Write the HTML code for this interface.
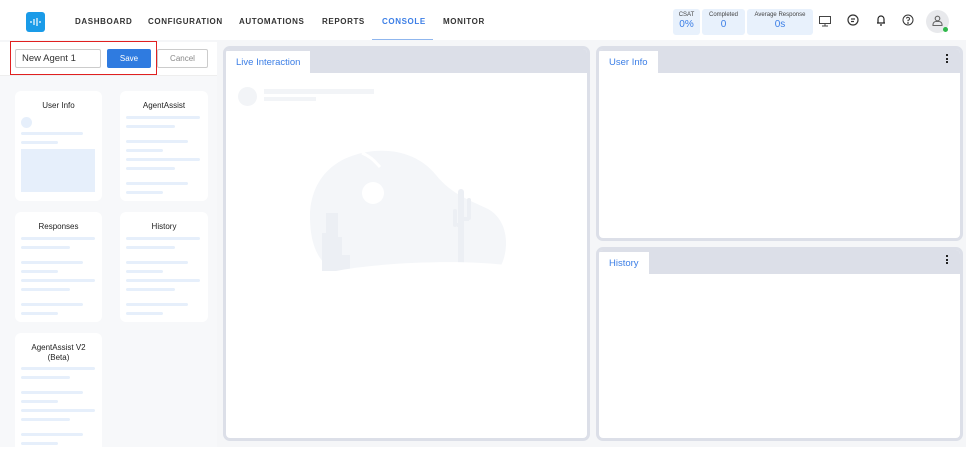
<!DOCTYPE html>
<html><head><style>
*{margin:0;padding:0;box-sizing:border-box}
body{width:978px;height:457px;background:#fff;font-family:"Liberation Sans",sans-serif;position:relative;overflow:hidden}
.a{position:absolute}
.nav{font-size:8px;font-weight:bold;letter-spacing:.6px;color:#333;top:17px}
.card{position:absolute;background:#fff;border-radius:6px}
.card .t{text-align:center;font-size:8px;color:#222;margin-top:10px;line-height:10px}
.ln{position:absolute;height:3px;background:#e6effb;border-radius:2px}
.panel{position:absolute;border:3px solid #dcdfe8;border-radius:7px;background:#fff;overflow:hidden}
.panel .hd{height:24px;background:#dcdfe8;position:relative}
.panel .tab{position:absolute;left:0;top:2px;height:22px;background:#fff;color:#3b7ee6;font-size:9.5px;padding:6px 10px 0}
.dots{position:absolute;right:12px;top:5px;width:2px}
.dots i{display:block;width:2px;height:2px;background:#222;margin-bottom:1.5px}
.stat{position:absolute;top:9px;height:26px;background:#e8f1fc;border-radius:3px;text-align:center;font-size:6px;color:#444;padding-top:3px}
.stat b{display:block;font-size:10px;color:#3b7ee6;font-weight:normal;margin-top:1px}
</style></head><body>
<div class="a" style="left:26px;top:12px;width:19px;height:20px;background:#1a9be8;border-radius:3px"></div>
<svg class="a" style="left:28px;top:15px" width="15" height="14"><g stroke="#fff" stroke-width="1.2"><line x1="3" y1="6" x2="3" y2="8"/><line x1="6" y1="4" x2="6" y2="10"/><line x1="9" y1="3" x2="9" y2="11"/><line x1="12" y1="6" x2="12" y2="8"/></g></svg>
<div class="a nav" style="left:75px">DASHBOARD</div>
<div class="a nav" style="left:148px">CONFIGURATION</div>
<div class="a nav" style="left:239px">AUTOMATIONS</div>
<div class="a nav" style="left:322px">REPORTS</div>
<div class="a nav" style="left:382px;color:#3b7ee6">CONSOLE</div>
<div class="a nav" style="left:443px">MONITOR</div>
<div class="a" style="left:372px;top:39px;width:61px;height:2px;background:#8fb6ee"></div>
<div class="stat" style="left:673px;width:27px">CSAT<b>0%</b></div>
<div class="stat" style="left:702px;width:43px">Completed<b>0</b></div>
<div class="stat" style="left:747px;width:66px">Average Response<b>0s</b></div>
<svg class="a" style="left:818px;top:14px" width="14" height="14" fill="none" stroke="#444" stroke-width="1"><rect x="1.5" y="2.5" width="11" height="7"/><line x1="7" y1="9.5" x2="7" y2="12"/><line x1="4" y1="12" x2="10" y2="12"/></svg>
<svg class="a" style="left:846px;top:13px" width="14" height="14" fill="none" stroke="#333" stroke-width="1.2"><circle cx="7" cy="7" r="5"/><line x1="5" y1="6" x2="9" y2="6"/><line x1="5" y1="8.5" x2="8" y2="8.5"/></svg>
<svg class="a" style="left:874px;top:13px" width="14" height="14" fill="none" stroke="#222" stroke-width="1.2"><path d="M4 10V6a3 3 0 0 1 6 0v4zM3 10h8M6 12h2"/></svg>
<svg class="a" style="left:901px;top:13px" width="14" height="14" fill="none" stroke="#333" stroke-width="1"><circle cx="7" cy="7" r="5"/><path d="M5.5 5.5a1.5 1.5 0 1 1 1.5 1.8v1"/><circle cx="7" cy="10" r=".4"/></svg>
<div class="a" style="left:926px;top:10px;width:23px;height:23px;border-radius:50%;background:#e8e9ec"></div>
<svg class="a" style="left:931px;top:14px" width="13" height="13" fill="none" stroke="#666" stroke-width="1.1"><circle cx="6.5" cy="4.5" r="2.3"/><path d="M2 11.5v-1a3 3 0 0 1 3-3h3a3 3 0 0 1 3 3v1z"/></svg>
<div class="a" style="left:943px;top:27px;width:5px;height:5px;border-radius:50%;background:#2fb84a"></div>
<div class="a" style="left:0;top:40px;width:966px;height:407px;background:#f5f6f8"></div>
<div class="a" style="left:0;top:76px;width:217px;height:371px;background:#f7f8fa"></div>
<div class="a" style="left:0;top:42px;width:217px;height:34px;background:#fff;border-bottom:1px solid #eee"></div>
<div class="a" style="left:15px;top:49px;width:86px;height:19px;border:1px solid #ccc;border-radius:2px;font-size:9.5px;color:#333;padding:3px 6px">New Agent 1</div>
<div class="a" style="left:107px;top:49px;width:44px;height:19px;background:#2f7be0;border-radius:2px;color:#fff;font-size:8px;text-align:center;line-height:19px">Save</div>
<div class="a" style="left:157px;top:49px;width:51px;height:19px;border:1px solid #ccc;border-radius:2px;color:#888;font-size:8px;text-align:center;line-height:17px">Cancel</div>
<div class="a" style="left:10px;top:41px;width:147px;height:34px;border:1.5px solid #e02020"></div>

<div class="card" style="left:15px;top:91px;width:87px;height:110px"><div class="t">User Info</div>
<div class="a" style="left:6px;top:26px;width:11px;height:11px;border-radius:50%;background:#e6effb"></div>
<div class="ln" style="left:6px;top:41px;width:62px"></div><div class="ln" style="left:6px;top:50px;width:37px"></div>
<div class="a" style="left:6px;top:58px;width:74px;height:43px;background:#e6effb"></div></div>
<div class="card" style="left:120px;top:91px;width:88px;height:110px"><div class="t">AgentAssist</div>
<div class="ln" style="left:6px;top:25px;width:74px"></div><div class="ln" style="left:6px;top:34px;width:49px"></div>
<div class="ln" style="left:6px;top:49px;width:62px"></div><div class="ln" style="left:6px;top:58px;width:37px"></div>
<div class="ln" style="left:6px;top:67px;width:74px"></div><div class="ln" style="left:6px;top:76px;width:49px"></div>
<div class="ln" style="left:6px;top:91px;width:62px"></div><div class="ln" style="left:6px;top:100px;width:37px"></div></div>
<div class="card" style="left:15px;top:212px;width:87px;height:110px"><div class="t">Responses</div>
<div class="ln" style="left:6px;top:25px;width:74px"></div><div class="ln" style="left:6px;top:34px;width:49px"></div>
<div class="ln" style="left:6px;top:49px;width:62px"></div><div class="ln" style="left:6px;top:58px;width:37px"></div>
<div class="ln" style="left:6px;top:67px;width:74px"></div><div class="ln" style="left:6px;top:76px;width:49px"></div>
<div class="ln" style="left:6px;top:91px;width:62px"></div><div class="ln" style="left:6px;top:100px;width:37px"></div></div>
<div class="card" style="left:120px;top:212px;width:88px;height:110px"><div class="t">History</div>
<div class="ln" style="left:6px;top:25px;width:74px"></div><div class="ln" style="left:6px;top:34px;width:49px"></div>
<div class="ln" style="left:6px;top:49px;width:62px"></div><div class="ln" style="left:6px;top:58px;width:37px"></div>
<div class="ln" style="left:6px;top:67px;width:74px"></div><div class="ln" style="left:6px;top:76px;width:49px"></div>
<div class="ln" style="left:6px;top:91px;width:62px"></div><div class="ln" style="left:6px;top:100px;width:37px"></div></div>
<div class="card" style="left:15px;top:333px;width:87px;height:120px"><div class="t">AgentAssist V2<br>(Beta)</div>
<div class="ln" style="left:6px;top:34px;width:74px"></div><div class="ln" style="left:6px;top:43px;width:49px"></div>
<div class="ln" style="left:6px;top:58px;width:62px"></div><div class="ln" style="left:6px;top:67px;width:37px"></div>
<div class="ln" style="left:6px;top:76px;width:74px"></div><div class="ln" style="left:6px;top:85px;width:49px"></div>
<div class="ln" style="left:6px;top:100px;width:62px"></div><div class="ln" style="left:6px;top:109px;width:37px"></div></div>

<div class="panel" style="left:223px;top:46px;width:367px;height:395px"><div class="hd"><div class="tab">Live Interaction</div></div>
<div class="a" style="left:12px;top:38px;width:19px;height:19px;border-radius:50%;background:#f2f4f7"></div>
<div class="a" style="left:38px;top:40px;width:110px;height:5px;background:#f2f4f7"></div>
<div class="a" style="left:38px;top:48px;width:52px;height:4px;background:#f2f4f7"></div>
<svg class="a" style="left:80px;top:98px" width="210" height="130">
<path d="M56 6c28-6 56 0 74 22 16 20 36 26 52 34 22 12 22 44 10 62H28C14 116 4 100 4 70 4 40 20 14 56 6z" fill="#f4f6f9"/>
<path d="M56 6c10 4 14 10 18 14" stroke="#fff" stroke-width="3" fill="none"/>
<path d="M16 124V86h4V66h12v24h4v18h8v16z" fill="#eceff4"/>
<circle cx="67" cy="46" r="11" fill="#fff"/>
<rect x="152" y="42" width="6" height="84" rx="3" fill="#eceff4"/>
<rect x="147" y="62" width="4" height="18" rx="2" fill="#eceff4"/>
<path d="M151 78h3" stroke="#eceff4" stroke-width="4"/>
<rect x="161" y="51" width="4" height="22" rx="2" fill="#eceff4"/>
<path d="M158 72h5" stroke="#eceff4" stroke-width="4"/>
<path d="M30 124c40-8 120-12 170-6v8H30z" fill="#fff"/>
</svg>
</div>
<div class="panel" style="left:596px;top:46px;width:367px;height:195px"><div class="hd"><div class="tab">User Info</div><div class="dots"><i></i><i></i><i></i></div></div></div>
<div class="panel" style="left:596px;top:247px;width:367px;height:194px"><div class="hd"><div class="tab">History</div><div class="dots"><i></i><i></i><i></i></div></div></div>
</body></html>
